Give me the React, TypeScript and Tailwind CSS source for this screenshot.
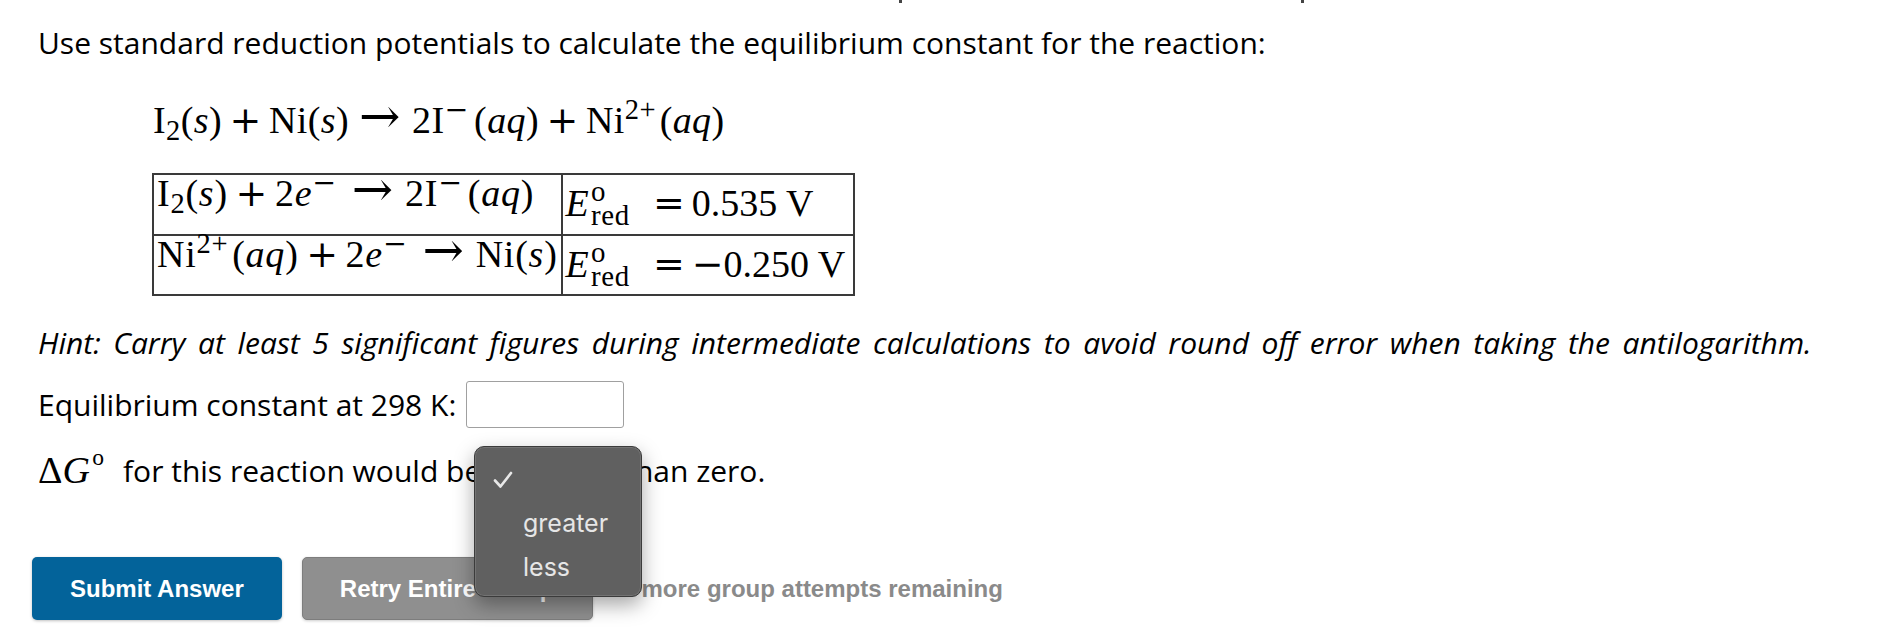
import React from "react";

const serif = "font-['Liberation_Serif',serif]";
const opf = "font-['DejaVu_Serif',serif]";

function Ered() {
  return (
    <span className="inline-flex items-baseline tracking-[0.02em]">
      <i className="pr-[0.02em]">E</i>
      <span className="relative inline-block w-[1.25em] h-[1em]">
        <span className="absolute left-[0.02em] top-[-0.04em] text-[0.76em] leading-none">o</span>
        <span className="absolute left-[0.02em] top-[0.78em] text-[0.76em] leading-none">red</span>
      </span>
    </span>
  );
}

const Bin = ({ c }: { c: string }) => <span className={`${opf} mx-[0.2em] tracking-normal`}>{c}</span>;
const Arrow = () => (
  <span className={`${opf} ml-[0.2em] mr-[0.24em] text-[1.3em] leading-[0] tracking-normal`}>→</span>
);
const Eq = () => <span className={`${opf} ml-[0.4em] mr-[0.18em] tracking-normal`}>=</span>;
const Minus = () => <sup className={`${opf} tracking-normal`}>−</sup>;

export default function App() {
  return (
    <div className="relative w-[1880px] h-[640px] bg-white overflow-hidden font-['Open_Sans',sans-serif] text-black">
      <div className="flex h-[3px]">
        <span className="ml-[899px] w-[3px] h-[3px] bg-[#444]" />
        <span className="ml-[399px] w-[3px] h-[3px] bg-[#444]" />
      </div>

      <div className="pl-[38px]">
        <p className="mt-[20px] text-[30px] leading-[40px]">
          Use standard reduction potentials to calculate the equilibrium constant for the reaction:
        </p>

        <div className={`mt-[32px] ml-[115px] h-[50px] text-[38px] leading-[50px] tracking-[0.01em] whitespace-nowrap ${serif}`}>
          I<sub>2</sub>(<i>s</i>)<Bin c="+" />Ni(<i>s</i>)<Arrow />2I<Minus /><span className="ml-[0.15em]">(<i>aq</i>)</span><Bin c="+" />Ni<sup>2+</sup><span className="ml-[0.1em]">(<i>aq</i>)</span>
        </div>

        <table className={`mt-[28px] ml-[114px] border-collapse text-[38px] leading-[30px] ${serif}`}>
          <tbody>
            <tr className="h-[61px]">
              <td className="w-[406px] h-[61px] border-2 border-[#3a3a3a] px-[3px] pt-[3px] align-top whitespace-nowrap tracking-[0.02em]">
                I<sub>2</sub>(<i>s</i>)<Bin c="+" />2<i>e</i><Minus /><span className="ml-[0.15em]" /><Arrow />2I<Minus /><span className="ml-[0.15em]">(<i>aq</i>)</span>
              </td>
              <td className="w-[292px] h-[61px] border-2 border-[#3a3a3a] px-[3px] pt-[3px] align-top whitespace-nowrap">
                <Ered />
                <Eq />0.535 V
              </td>
            </tr>
            <tr className="h-[60px]">
              <td className="h-[60px] border-2 border-[#3a3a3a] px-[3px] pt-[3px] align-top whitespace-nowrap tracking-[0.02em]">
                Ni<sup>2+</sup><span className="ml-[0.1em]">(<i>aq</i>)</span><Bin c="+" />2<i>e</i><Minus /><span className="ml-[0.15em]" /><Arrow />Ni(<i>s</i>)
              </td>
              <td className="h-[60px] border-2 border-[#3a3a3a] px-[3px] pt-[3px] align-top whitespace-nowrap">
                <Ered />
                <Eq /><span className={`${opf} tracking-normal`}>−</span>0.250 V
              </td>
            </tr>
          </tbody>
        </table>

        <p className="mt-[27px] text-[30px] leading-[40px] italic whitespace-nowrap [word-spacing:4.8px]">
          Hint: Carry at least 5 significant figures during intermediate calculations to avoid round off error when taking the antilogarithm.
        </p>

        <div className="mt-[17px] flex items-center h-[48px] text-[30px]">
          <span>Equilibrium constant at 298 K:</span>
          <span className="ml-[10px] w-[158px] h-[47px] border-[1.5px] border-[#a0a0a0] rounded-[3px] bg-white" />
        </div>

        <div className="mt-[22px] flex items-center h-[40px] text-[30px] whitespace-nowrap">
          <span className={`${serif} text-[38px] leading-[40px]`}>
            Δ<i>G</i>
            <sup className="text-[0.62em] top-[-0.75em] ml-[0.1em]">o</sup>
          </span>
          <span className="ml-[19px]">for this reaction would be</span>
          <span className="inline-block w-[133px] h-[36px] ml-[6px] border border-[#bbb] rounded-[4px]" />
          <span className="ml-[4px]">than zero.</span>
        </div>

        <div className="mt-[67px] flex items-center font-['Liberation_Sans',Arial,sans-serif] font-bold text-[24px] text-white">
          <button className="h-[63px] px-[38px] rounded-[5px] bg-[#03639a] shadow-[0_1px_3px_rgba(0,0,0,0.25)] ml-[-6px]">
            Submit Answer
          </button>
          <button className="ml-[20px] h-[63px] px-[37px] rounded-[5px] bg-[#8f8f8f] border border-[#7d7d7d] shadow-[0_1px_3px_rgba(0,0,0,0.2)]">
            Retry Entire Group
          </button>
          <span className="ml-[29px] text-[#8a8a8a]">4 more group attempts remaining</span>
        </div>
      </div>

      <div className="absolute left-[474px] top-[446px] w-[168px] h-[151px] rounded-[10px] bg-[#606060] border border-[#3b3b3b] shadow-[0_8px_20px_rgba(0,0,0,0.35),inset_0_0_0_1px_rgba(255,255,255,0.12)] font-['Inter',sans-serif] text-[25px] text-[#e6e6e6]">
        <div className="h-[54px] pt-[24px] pl-[18px]">
          <svg width="20" height="18" viewBox="0 0 20 18" fill="none">
            <path d="M2 9.5 L7.5 15.5 L18 2" stroke="#e8e8e8" strokeWidth="2.6" strokeLinecap="round" strokeLinejoin="round" />
          </svg>
        </div>
        <div className="pl-[48px] leading-[44px]">greater</div>
        <div className="pl-[48px] leading-[44px]">less</div>
      </div>
    </div>
  );
}
